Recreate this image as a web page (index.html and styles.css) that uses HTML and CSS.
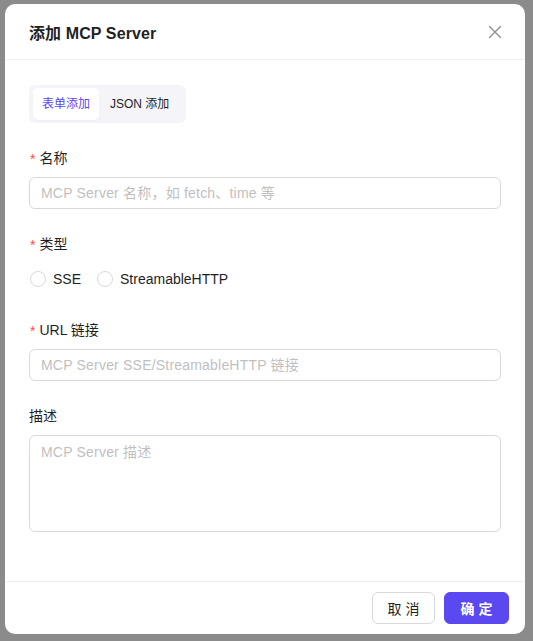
FILE: index.html
```html
<!DOCTYPE html>
<html lang="zh">
<head>
<meta charset="utf-8">
<title>添加 MCP Server</title>
<link rel="stylesheet" href="styles.css">
</head>
<body>
<div class="modal">
  <div class="modal-header">
    <div class="modal-title">添加 MCP Server</div>
    <button class="close" aria-label="close">
      <svg width="14" height="14" viewBox="0 0 14 14"><path d="M1.5 1.5L12.5 12.5M12.5 1.5L1.5 12.5" stroke="#8c8c8c" stroke-width="1.3" fill="none" stroke-linecap="round"/></svg>
    </button>
  </div>
  <div class="modal-body">
    <div class="segmented">
      <div class="seg-item active">表单添加</div>
      <div class="seg-item">JSON 添加</div>
    </div>

    <div class="form-item">
      <div class="label"><span class="req">*</span>名称</div>
      <div class="input placeholder">MCP Server 名称，如 fetch、time 等</div>
    </div>

    <div class="form-item">
      <div class="label"><span class="req">*</span>类型</div>
      <div class="radios">
        <label class="radio"><span class="dot"></span>SSE</label>
        <label class="radio"><span class="dot"></span>StreamableHTTP</label>
      </div>
    </div>

    <div class="form-item">
      <div class="label"><span class="req">*</span>URL 链接</div>
      <div class="input placeholder">MCP Server SSE/StreamableHTTP 链接</div>
    </div>

    <div class="form-item last">
      <div class="label">描述</div>
      <div class="textarea placeholder">MCP Server 描述</div>
    </div>
  </div>
  <div class="modal-footer">
    <button class="btn">取 消</button>
    <button class="btn primary">确 定</button>
  </div>
</div>
</body>
</html>
```
FILE: styles.css
```css
html, body {
  margin: 0;
  padding: 0;
}
body {
  background: #8b8b8b;
  font-family: "Liberation Sans", "Noto Sans CJK SC", sans-serif;
  color: #1f1f1f;
  width: 533px;
  height: 641px;
  overflow: hidden;
}
.modal {
  margin: 4px 0 0 5px;
  width: 520px;
  height: 630px;
  background: #fff;
  border-radius: 10px;
  display: flex;
  flex-direction: column;
  overflow: hidden;
}
.modal-header {
  height: 56px;
  box-sizing: border-box;
  border-bottom: 1px solid #f0f0f0;
  padding: 0 20px 0 24px;
  display: flex;
  align-items: center;
  justify-content: space-between;
  flex-shrink: 0;
}
.modal-title {
  font-size: 16px;
  font-weight: 600;
  color: #1f1f1f;
  letter-spacing: 0.1px;
}
.close {
  border: none;
  background: none;
  padding: 0;
  width: 20px;
  height: 20px;
  display: flex;
  align-items: center;
  justify-content: center;
}
.modal-body {
  flex: 1;
  padding: 25px 24px 0 24px;
  box-sizing: border-box;
}
.segmented {
  display: inline-flex;
  background: #f5f5f9;
  border-radius: 6px;
  padding: 3px 4px;
  gap: 2px;
  margin-bottom: 24px;
}
.seg-item {
  height: 32px;
  line-height: 32px;
  padding: 0 9px;
  font-size: 12px;
  color: #1f1f1f;
  border-radius: 5px;
}
.seg-item + .seg-item {
  padding-right: 13px;
}
.seg-item.active {
  background: #fff;
  color: #5a48f0;
  box-shadow: 0 1px 2px rgba(0,0,0,0.03);
}
.form-item {
  margin-bottom: 24px;
}
.label {
  font-size: 14px;
  line-height: 22px;
  margin-bottom: 8px;
  color: #1f1f1f;
  display: flex;
  align-items: center;
}
.req {
  color: #ff4d4f;
  font-size: 14px;
  margin-right: 4px;
  margin-left: 1px;
  position: relative;
  top: 1px;
}
.input, .textarea {
  border: 1px solid #d9d9d9;
  border-radius: 6px;
  box-sizing: border-box;
  font-size: 14px;
  padding: 0 11px;
  letter-spacing: 0.2px;
}
.input {
  height: 32px;
  line-height: 30px;
}
.textarea {
  height: 97px;
  padding-top: 5px;
  line-height: 22px;
}
.placeholder {
  color: #bfbfbf;
}
.radios {
  display: flex;
  align-items: center;
  height: 32px;
  gap: 15px;
}
.radio {
  display: flex;
  align-items: center;
  font-size: 14px;
  color: #1f1f1f;
}
.dot {
  width: 16px;
  height: 16px;
  box-sizing: border-box;
  border: 1px solid #d9d9d9;
  border-radius: 50%;
  margin: 0 7px 0 1px;
  background: #fff;
}
.modal-footer {
  height: 53px;
  box-sizing: border-box;
  border-top: 1px solid #f0f0f0;
  padding: 10px 16px 10px 0;
  display: flex;
  justify-content: flex-end;
  align-items: center;
  gap: 9px;
  flex-shrink: 0;
}
.btn {
  height: 32px;
  width: 63px;
  border: 1px solid #d9d9d9;
  background: #fff;
  border-radius: 6px;
  font-family: "Liberation Sans", "Noto Sans CJK SC", sans-serif;
  font-size: 14px;
  color: #1f1f1f;
  padding: 0;
}
.btn.primary {
  width: 65px;
  background: #5a48f0;
  border-color: #5a48f0;
  color: #fff;
  font-weight: 600;
}
```
